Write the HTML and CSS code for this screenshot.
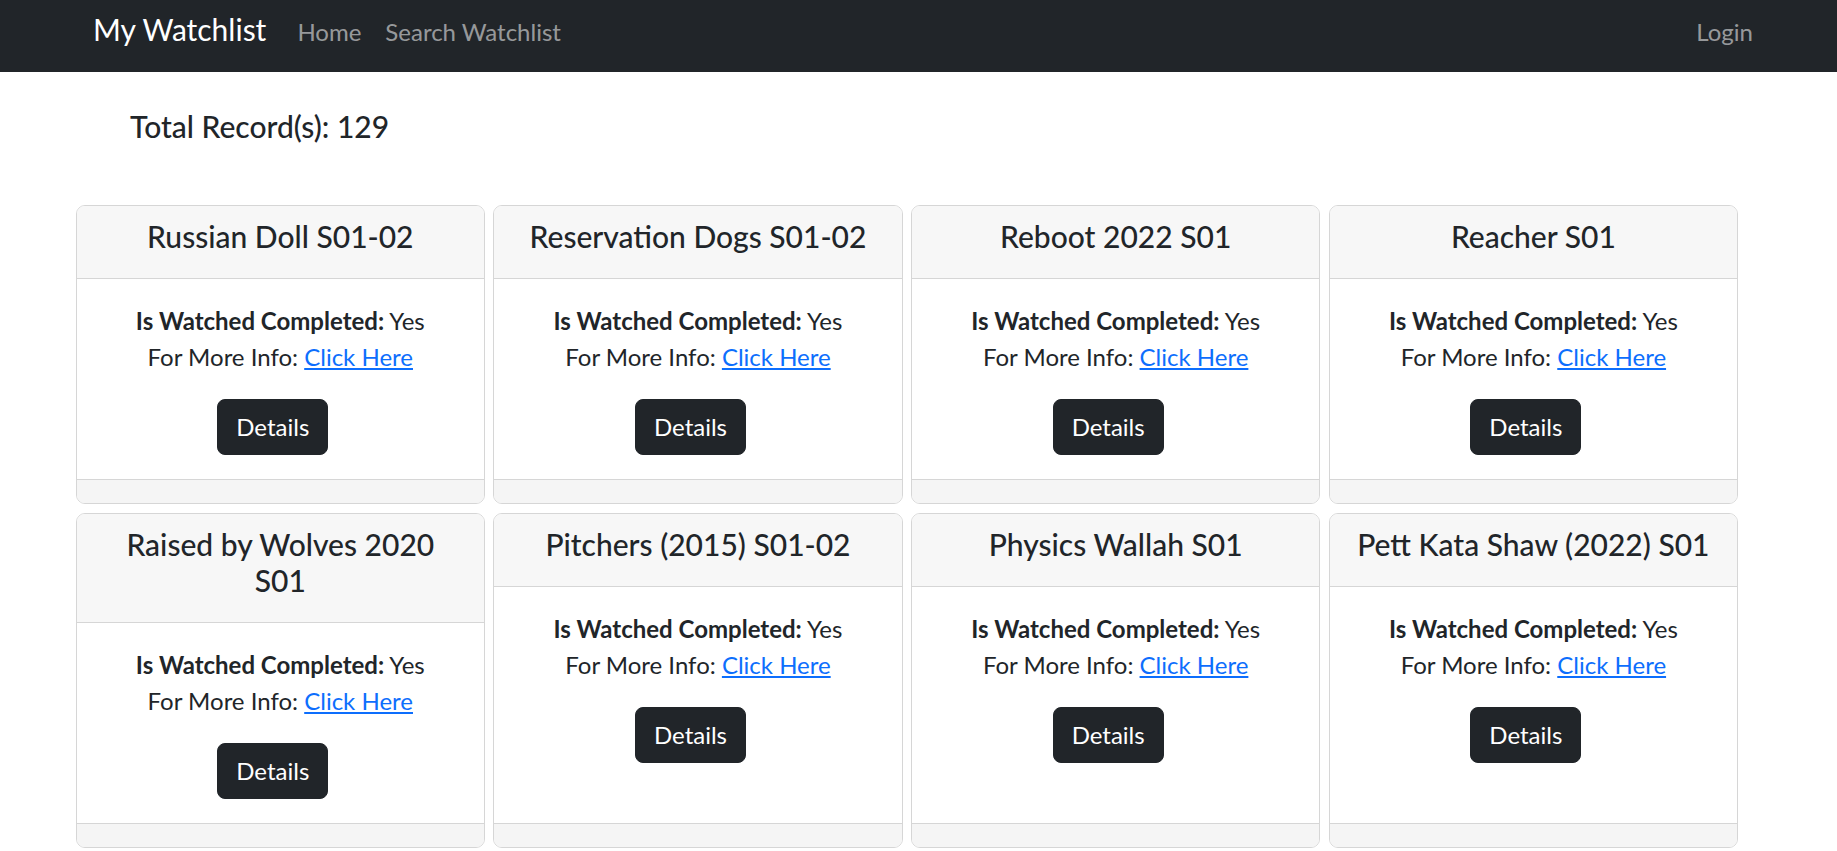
FILE: index.html
```html
<!DOCTYPE html>
<html lang="en">
<head>
    <meta charset="UTF-8">
    <meta name="viewport" content="width=device-width, initial-scale=1.0">
    <title>My Watchlist</title>
    <link rel="stylesheet" href="styles.css">
</head>
<body>
    <nav class="navbar">
        <a class="brand" href="#">My Watchlist</a>
        <ul class="nav-links">
            <li><a href="#">Home</a></li>
            <li><a href="#">Search Watchlist</a></li>
        </ul>
        <ul class="nav-links nav-right">
            <li><a href="#">Login</a></li>
        </ul>
    </nav>

    <main class="page">
        <h5 class="total">Total Record(s): 129</h5>

        <div class="card-grid">
            <div class="card">
                <div class="card-header"><h5 class="card-title">Russian Doll S01-02</h5></div>
                <div class="card-body">
                    <p class="card-text"><b>Is Watched Completed:</b> Yes<br>For More Info: <a href="#">Click Here</a></p>
                    <a class="btn-details" href="#">Details</a>
                </div>
                <div class="card-footer"></div>
            </div>
            <div class="card">
                <div class="card-header"><h5 class="card-title">Reservation Dogs S01-02</h5></div>
                <div class="card-body">
                    <p class="card-text"><b>Is Watched Completed:</b> Yes<br>For More Info: <a href="#">Click Here</a></p>
                    <a class="btn-details" href="#">Details</a>
                </div>
                <div class="card-footer"></div>
            </div>
            <div class="card">
                <div class="card-header"><h5 class="card-title">Reboot 2022 S01</h5></div>
                <div class="card-body">
                    <p class="card-text"><b>Is Watched Completed:</b> Yes<br>For More Info: <a href="#">Click Here</a></p>
                    <a class="btn-details" href="#">Details</a>
                </div>
                <div class="card-footer"></div>
            </div>
            <div class="card">
                <div class="card-header"><h5 class="card-title">Reacher S01</h5></div>
                <div class="card-body">
                    <p class="card-text"><b>Is Watched Completed:</b> Yes<br>For More Info: <a href="#">Click Here</a></p>
                    <a class="btn-details" href="#">Details</a>
                </div>
                <div class="card-footer"></div>
            </div>
            <div class="card">
                <div class="card-header"><h5 class="card-title">Raised by Wolves 2020 S01</h5></div>
                <div class="card-body">
                    <p class="card-text"><b>Is Watched Completed:</b> Yes<br>For More Info: <a href="#">Click Here</a></p>
                    <a class="btn-details" href="#">Details</a>
                </div>
                <div class="card-footer"></div>
            </div>
            <div class="card">
                <div class="card-header"><h5 class="card-title">Pitchers (2015) S01-02</h5></div>
                <div class="card-body">
                    <p class="card-text"><b>Is Watched Completed:</b> Yes<br>For More Info: <a href="#">Click Here</a></p>
                    <a class="btn-details" href="#">Details</a>
                </div>
                <div class="card-footer"></div>
            </div>
            <div class="card">
                <div class="card-header"><h5 class="card-title">Physics Wallah S01</h5></div>
                <div class="card-body">
                    <p class="card-text"><b>Is Watched Completed:</b> Yes<br>For More Info: <a href="#">Click Here</a></p>
                    <a class="btn-details" href="#">Details</a>
                </div>
                <div class="card-footer"></div>
            </div>
            <div class="card">
                <div class="card-header"><h5 class="card-title">Pett Kata Shaw (2022) S01</h5></div>
                <div class="card-body">
                    <p class="card-text"><b>Is Watched Completed:</b> Yes<br>For More Info: <a href="#">Click Here</a></p>
                    <a class="btn-details" href="#">Details</a>
                </div>
                <div class="card-footer"></div>
            </div>
        </div>
    </main>
</body>
</html>
```

FILE: styles.css
```css
body {
    margin: 0;
    font-family: Lato, "Open Sans", sans-serif;
    font-size: 24px;
    line-height: 1.5;
    color: #212529;
    background: #fff;
}
a {
    color: #0d6efd;
}

/* navbar */
.navbar {
    display: flex;
    align-items: baseline;
    height: 72px;
    box-sizing: border-box;
    padding: 7px 72px 0 93px;
    background: #212529;
}
.brand {
    font-size: 30px;
    line-height: 45px;
    color: #fff;
    text-decoration: none;
    margin-right: 19px;
}
.nav-links {
    display: flex;
    list-style: none;
    margin: 0;
    padding: 0;
}
.nav-links a {
    display: block;
    padding: 0 12px;
    font-size: 24px;
    line-height: 36px;
    color: rgba(255, 255, 255, 0.55);
    text-decoration: none;
}
.nav-right {
    margin-left: auto;
}

/* page */
.page {
    padding-left: 75.5px;
}
.total {
    margin: 35.7px 0 0 54.5px;
    font-size: 30px;
    line-height: 36px;
    font-weight: 500;
}

.card-grid {
    display: grid;
    grid-template-columns: repeat(4, 409.6px);
    column-gap: 8.1px;
    row-gap: 9px;
    margin-top: 61px;
}
.card {
    display: flex;
    flex-direction: column;
    border: 1px solid #d6d6d6;
    border-radius: 9px;
    overflow: hidden;
    text-align: center;
}
.card-header {
    padding: 12px 22px;
    background: #f7f7f7;
    border-bottom: 1px solid #d6d6d6;
}
.card-title {
    margin: 0 0 12px;
    font-size: 30px;
    line-height: 36px;
    font-weight: 500;
}
.card-body {
    flex: 1;
    padding: 24px;
}
.card-text {
    margin: 0 0 24px;
}
.card-text b {
    font-weight: 700;
}
.btn-details {
    display: inline-block;
    margin-right: 15px;
    padding: 9px 18px;
    border: 1px solid #212529;
    border-radius: 8px;
    background: #212529;
    color: #fff;
    line-height: 36px;
    text-decoration: none;
}
.card-footer {
    padding: 11.5px 0;
    background: #f5f5f5;
    border-top: 1px solid #d6d6d6;
}
```
